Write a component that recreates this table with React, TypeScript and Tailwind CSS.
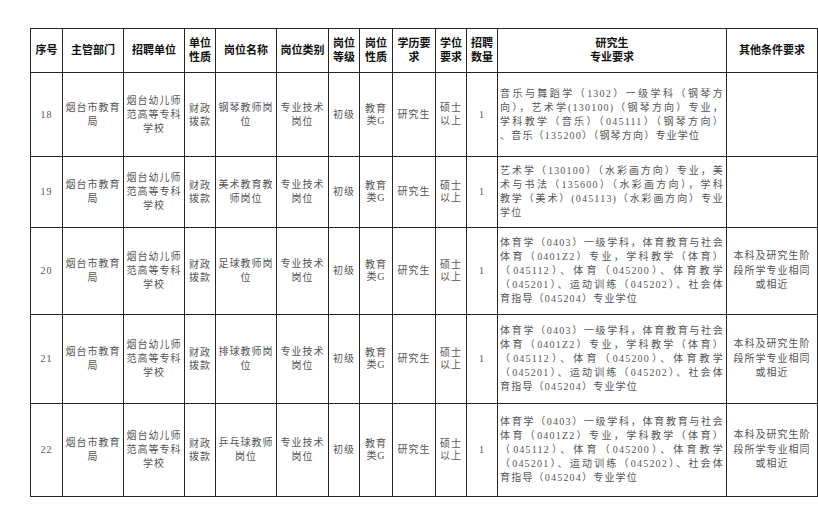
import React from "react";

const FONT = '"Liberation Serif", "Noto Sans CJK SC", serif';

const headers: string[][] = [
  ["序号"],
  ["主管部门"],
  ["招聘单位"],
  ["单位", "性质"],
  ["岗位名称"],
  ["岗位类别"],
  ["岗位", "等级"],
  ["岗位", "性质"],
  ["学历要", "求"],
  ["学位", "要求"],
  ["招聘", "数量"],
  ["研究生", "专业要求"],
  ["其他条件要求"],
];

const widths = [32, 61, 61, 31, 61, 52, 31, 33, 43, 31, 31, 229, 91];

const pe = [
  "体育学（0403）一级学科，体育教育与社会",
  "体育（0401Z2）专业，学科教学（体育）",
  "（045112）、体育（045200）、体育教学",
  "（045201）、运动训练（045202）、社会体",
  "育指导（045204）专业学位",
];
const same = ["本科及研究生阶", "段所学专业相同", "或相近"];

type Row = { no: string; h: string; name: string[]; major: string[]; other: string[] };

const rows: Row[] = [
  {
    no: "18",
    h: "h-[84px]",
    name: ["钢琴教师岗", "位"],
    major: [
      "音乐与舞蹈学（1302）一级学科（钢琴方",
      "向），艺术学(130100)（钢琴方向）专业，",
      "学科教学（音乐）（045111）（钢琴方向）",
      "、音乐（135200）（钢琴方向）专业学位",
    ],
    other: [],
  },
  {
    no: "19",
    h: "h-[71px]",
    name: ["美术教育教", "师岗位"],
    major: [
      "艺术学（130100）（水彩画方向）专业，美",
      "术与书法（135600）（水彩画方向），学科",
      "教学（美术）(045113)（水彩画方向）专业",
      "学位",
    ],
    other: [],
  },
  { no: "20", h: "h-[87px]", name: ["足球教师岗", "位"], major: pe, other: same },
  { no: "21", h: "h-[89px]", name: ["排球教师岗", "位"], major: pe, other: same },
  { no: "22", h: "h-[93px]", name: ["乒乓球教师", "岗位"], major: pe, other: same },
];

function Lines({ lines, lh }: { lines: string[]; lh: string }) {
  return (
    <>
      {lines.map((l, i) => (
        <div key={i} className={`${lh} whitespace-nowrap`}>
          {l}
        </div>
      ))}
    </>
  );
}

function Td({ lines, lh = "leading-[14px]" }: { lines: string[]; lh?: string }) {
  return (
    <td className="border border-[#262626] p-0 text-center align-middle tracking-[1px]">
      <Lines lines={lines} lh={lh} />
    </td>
  );
}

export default function App() {
  return (
    <div className="min-h-[509px] w-[818px] bg-white pl-[30px] pt-[28px]" style={{ fontFamily: FONT }}>
      <table className="w-[787px] table-fixed border-collapse text-[10px] text-[#555]">
        <colgroup>
          {widths.map((w, i) => (
            <col key={i} style={{ width: w }} />
          ))}
        </colgroup>
        <thead>
          <tr className="h-[44px]">
            {headers.map((h, i) => (
              <th
                key={i}
                className="border border-[#262626] p-0 text-center align-middle text-[11px] font-bold text-[#111]"
              >
                <Lines lines={h} lh="leading-[13.5px]" />
              </th>
            ))}
          </tr>
        </thead>
        <tbody>
          {rows.map((r) => (
            <tr key={r.no} className={r.h}>
              <Td lines={[r.no]} />
              <Td lines={["烟台市教育", "局"]} />
              <Td lines={["烟台幼儿师", "范高等专科", "学校"]} />
              <Td lines={["财政", "拨款"]} lh="leading-[13px]" />
              <Td lines={r.name} />
              <Td lines={["专业技术", "岗位"]} />
              <Td lines={["初级"]} />
              <Td lines={["教育", "类G"]} lh="leading-[12px]" />
              <Td lines={["研究生"]} />
              <Td lines={["硕士", "以上"]} lh="leading-[12.5px]" />
              <Td lines={["1"]} />
              <td className="border border-[#262626] px-[2px] py-0 text-left align-middle tracking-[1.2px]">
                {r.major.map((l, i) => (
                  <div
                    key={i}
                    className={`whitespace-nowrap leading-[14px] ${
                      i < r.major.length - 1 ? "text-justify [text-align-last:justify]" : ""
                    }`}
                  >
                    {l}
                  </div>
                ))}
              </td>
              <td className="border border-[#262626] p-0 text-center align-middle tracking-[1px]">
                <Lines lines={r.other} lh="leading-[14.5px]" />
              </td>
            </tr>
          ))}
        </tbody>
      </table>
    </div>
  );
}
